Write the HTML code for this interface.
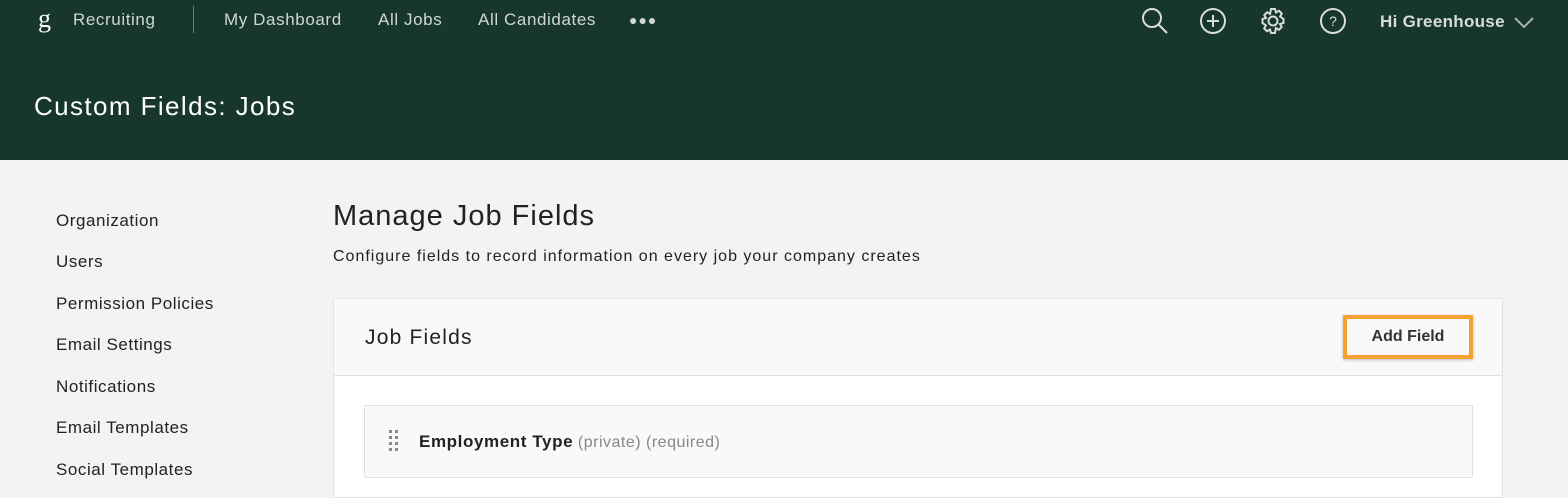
<!DOCTYPE html>
<html><head><meta charset="utf-8"><style>
*{margin:0;padding:0;box-sizing:border-box}
body{width:1568px;height:482px;overflow:hidden;background:#f3f3f3;font-family:"Liberation Sans",sans-serif;position:relative}
.hdr{position:absolute;left:0;top:0;width:1568px;height:160px;background:#17372c}
.t{position:absolute;white-space:nowrap}
.nav{color:#d0d6d3;font-size:17px;top:10px;letter-spacing:0.6px}
.side{color:#222;font-size:17px;left:56px;letter-spacing:0.55px}
</style></head><body>
<div class="hdr">
<div class="t" style="left:38px;top:4px;color:#fff;font-size:26px;font-family:'Liberation Serif',serif">g</div>
<div class="t nav" style="left:73px">Recruiting</div>
<div style="position:absolute;left:193px;top:6px;width:1px;height:27px;background:#6b7f77"></div>
<div class="t nav" style="left:224px">My Dashboard</div>
<div class="t nav" style="left:378px">All Jobs</div>
<div class="t nav" style="left:478px">All Candidates</div>
<div class="t nav" style="left:629px;top:12px;font-size:14px;letter-spacing:1px">●●●</div>
<svg style="position:absolute;left:1140px;top:6px" width="30" height="30" fill="none" stroke="#d8dcda" stroke-width="2"><circle cx="12" cy="12" r="9"/><line x1="18.5" y1="18.5" x2="27" y2="27"/></svg>
<svg style="position:absolute;left:1199px;top:7px" width="28" height="28" fill="none" stroke="#d8dcda" stroke-width="2"><circle cx="14" cy="14" r="12"/><line x1="14" y1="8" x2="14" y2="20"/><line x1="8" y1="14" x2="20" y2="14"/></svg>
<svg style="position:absolute;left:1259px;top:7px" width="28" height="28" fill="none" stroke="#d8dcda" stroke-width="2"><circle cx="14" cy="14" r="4.5"/><path d="M12 2h4l1 3.5 3-1.7 2.8 2.8-1.7 3L24.5 12v4l-3.5 1 1.7 3-2.8 2.8-3-1.7L16 26h-4l-1-3.5-3 1.7-2.8-2.8 1.7-3L3.5 16v-4L7 11 5.3 8 8.1 5.2l3 1.7z"/></svg>
<svg style="position:absolute;left:1319px;top:7px" width="28" height="28" fill="none" stroke="#d8dcda" stroke-width="2"><circle cx="14" cy="14" r="12"/><text x="14" y="19" text-anchor="middle" fill="#d8dcda" stroke="none" font-size="14" font-family="Liberation Sans">?</text></svg>
<div class="t" style="left:1380px;top:12px;color:#d8dcda;font-size:17px;font-weight:bold;letter-spacing:0.3px">Hi Greenhouse</div>
<svg style="position:absolute;left:1514px;top:17px" width="20" height="12" fill="none" stroke="#aab3af" stroke-width="2"><path d="M1 1l9 9 9-9"/></svg>
<div class="t" style="left:34px;top:91px;color:#fff;font-size:26px;letter-spacing:1.4px">Custom Fields: Jobs</div>
</div>
<div class="t side" style="top:211px">Organization</div>
<div class="t side" style="top:252px">Users</div>
<div class="t side" style="top:294px">Permission Policies</div>
<div class="t side" style="top:335px">Email Settings</div>
<div class="t side" style="top:377px">Notifications</div>
<div class="t side" style="top:418px">Email Templates</div>
<div class="t side" style="top:460px">Social Templates</div>
<div class="t" style="left:333px;top:200px;font-size:29px;color:#222;letter-spacing:1px">Manage Job Fields</div>
<div class="t" style="left:333px;top:248px;font-size:16px;color:#222;letter-spacing:1px">Configure fields to record information on every job your company creates</div>
<div style="position:absolute;left:333px;top:298px;width:1170px;height:200px;background:#fff;border:1px solid #e2e2e2">
<div style="height:77px;background:#f9f9f9;border-bottom:1px solid #e2e2e2;position:relative">
<div class="t" style="left:31px;top:27px;font-size:21px;color:#222;letter-spacing:1.2px">Job Fields</div>
<div style="position:absolute;left:1009px;top:16px;width:130px;height:44px;border:4px solid #f6a233;background:#f9f9f9;box-shadow:0 1px 3px rgba(0,0,0,.25);text-align:center;line-height:36px;font-size:16px;font-weight:bold;color:#333">Add Field</div>
</div>
<div style="position:absolute;left:30px;top:106px;width:1109px;height:73px;background:#f9f9f9;border:1px solid #e0e0e0;border-radius:2px">
<svg style="position:absolute;left:24px;top:24px" width="12" height="22" fill="#888"><rect x="0" y="0" width="3" height="3"/><rect x="6" y="0" width="3" height="3"/><rect x="0" y="6" width="3" height="3"/><rect x="6" y="6" width="3" height="3"/><rect x="0" y="12" width="3" height="3"/><rect x="6" y="12" width="3" height="3"/><rect x="0" y="18" width="3" height="3"/><rect x="6" y="18" width="3" height="3"/></svg>
<div class="t" style="left:54px;top:26px;font-size:17px;color:#222"><b style="letter-spacing:0.6px">Employment Type</b> <span style="color:#888;font-size:16px;letter-spacing:0.5px">(private) (required)</span></div>
</div>
</div>
</body></html>
